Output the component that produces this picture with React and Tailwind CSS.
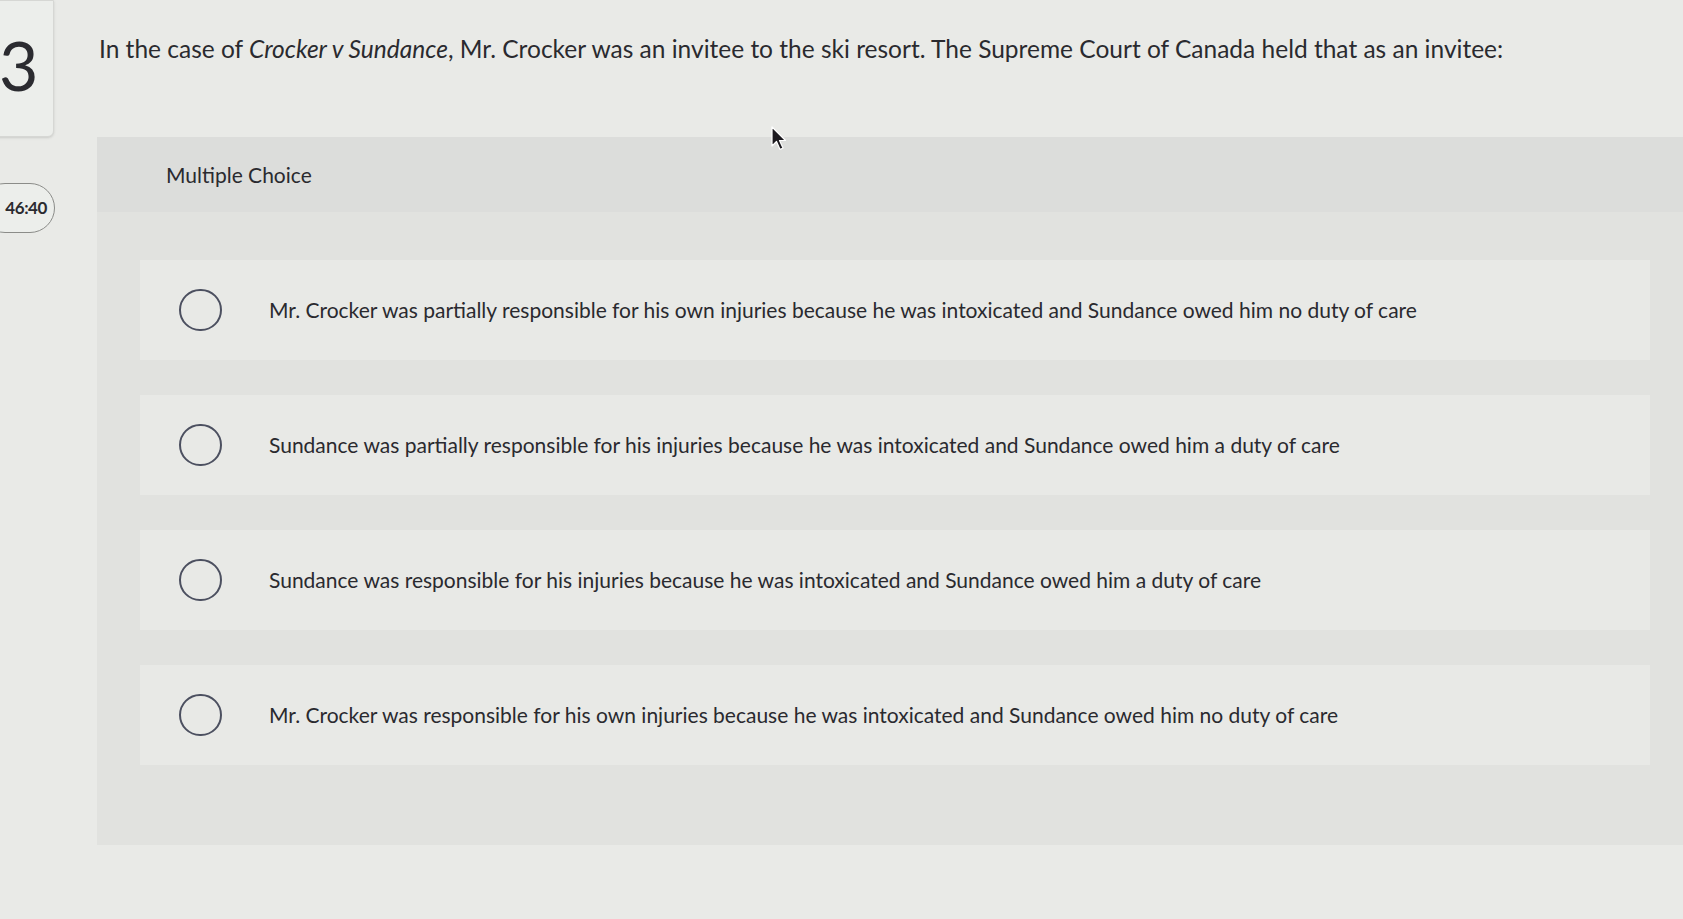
import React from 'react';

const options = [
  'Mr. Crocker was partially responsible for his own injuries because he was intoxicated and Sundance owed him no duty of care',
  'Sundance was partially responsible for his injuries because he was intoxicated and Sundance owed him a duty of care',
  'Sundance was responsible for his injuries because he was intoxicated and Sundance owed him a duty of care',
  'Mr. Crocker was responsible for his own injuries because he was intoxicated and Sundance owed him no duty of care',
];

const Cursor = () => (
  <svg
    className="absolute left-[771px] top-[126px]"
    width="16"
    height="26"
    viewBox="0 0 16 26"
  >
    <path
      d="M1 1 L1 20 L5.5 15.5 L9 23.5 L12 22 L8.5 14.5 L14.5 14.5 Z"
      fill="#1c1a1f"
      stroke="#ffffff"
      strokeWidth="1.2"
      strokeLinejoin="round"
    />
  </svg>
);

const App = () => {
  return (
    <div className="relative flex h-screen w-full overflow-hidden bg-[#e9eae7] text-[#2a2a2f] font-['Lato',_'Liberation_Sans',_sans-serif]">
      {/* left rail: question number + timer */}
      <div className="flex w-[55px] shrink-0 flex-col">
        <div className="-ml-[8px] flex h-[137px] w-[62px] items-start rounded-br-md border border-[#d6d7d4] bg-[#eceeeb] pl-[6px] pt-[30px] shadow-sm">
          <span className="text-[68px] font-normal leading-none text-[#2b2b30]">3</span>
        </div>
        <div className="-ml-[20px] mt-[46px] flex h-[50px] w-[75px] items-center justify-end rounded-full border-[1.5px] border-[#8b8c89] bg-[#eceeeb] pr-[7px]">
          <span className="text-[17px] font-bold tracking-tight text-[#2b2b30]">46:40</span>
        </div>
      </div>

      {/* main column */}
      <div className="flex flex-1 flex-col pl-[42px]">
        <div className="h-[137px] pl-[2px] pt-[34px]">
          <p className="text-[24.5px] leading-[30px]">
            In the case of <i>Crocker v Sundance</i>, Mr. Crocker was an invitee to the ski resort. The
            Supreme Court of Canada held that as an invitee:
          </p>
        </div>

        <div className="flex flex-col bg-[#e1e2df] pb-[80px]">
          <div className="flex h-[75px] items-center bg-[#dcdddb] pl-[69px]">
            <span className="text-[21px]">Multiple Choice</span>
          </div>

          <div className="flex flex-col gap-[35px] pt-[48px] pl-[43px] pr-[33px]">
            {options.map((text) => (
              <div
                key={text}
                className="flex h-[100px] items-center bg-[#e8e9e6] pl-[39px]"
              >
                <span className="h-[42px] w-[43px] shrink-0 rounded-full border-2 border-[#4c5060]" />
                <span className="ml-[47px] text-[21px]">{text}</span>
              </div>
            ))}
          </div>
        </div>
      </div>

      <Cursor />
    </div>
  );
};

export default App;
